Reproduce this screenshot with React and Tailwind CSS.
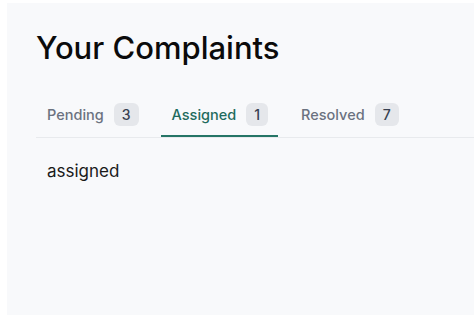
import { useState } from 'react';

const tabs = [
  { key: 'pending', label: 'Pending', count: 3 },
  { key: 'assigned', label: 'Assigned', count: 1 },
  { key: 'resolved', label: 'Resolved', count: 7 },
];

export default function App() {
  const [active, setActive] = useState('assigned');

  return (
    <div className="min-h-[321px] bg-white pl-[7px] pt-[3px] pb-[6px]" style={{ fontFamily: 'Inter, "Noto Sans", sans-serif' }}>
      <div className="h-[312px] bg-[#f8f9fb] pl-[29px] pt-[25px]">
        {/* HEADER */}
        <h1 className="text-[31px] leading-[40px] font-medium text-[#0b0b0b]">Your Complaints</h1>

        {/* TABS */}
        <div className="mt-[23px] flex gap-3 border-b border-[#e8eaed]">
          {tabs.map((tab) => {
            const isActive = tab.key === active;
            return (
              <button
                key={tab.key}
                onClick={() => setActive(tab.key)}
                className={
                  isActive
                    ? 'flex items-center gap-2.5 pl-[11px] pr-2.5 pt-3 pb-[9px] border-b-2 border-[#257566] text-[#1f6b5d]'
                    : 'flex items-center gap-2.5 pl-[11px] pr-2.5 pt-3 pb-[9px] border-b-2 border-transparent text-[#6b7280]'
                }
              >
                <span className="text-[14.5px] leading-5 font-medium">{tab.label}</span>
                <span className="rounded-md bg-[#e5e7eb] px-2 py-1 text-[14px] leading-[15px] font-medium text-[#374151]">
                  {tab.count}
                </span>
              </button>
            );
          })}
        </div>

        {/* CONTENT */}
        <div className="mt-[21px] pl-[11px] text-[17px] leading-6 text-[#1a1a1a]">{active}</div>
      </div>
    </div>
  );
}
